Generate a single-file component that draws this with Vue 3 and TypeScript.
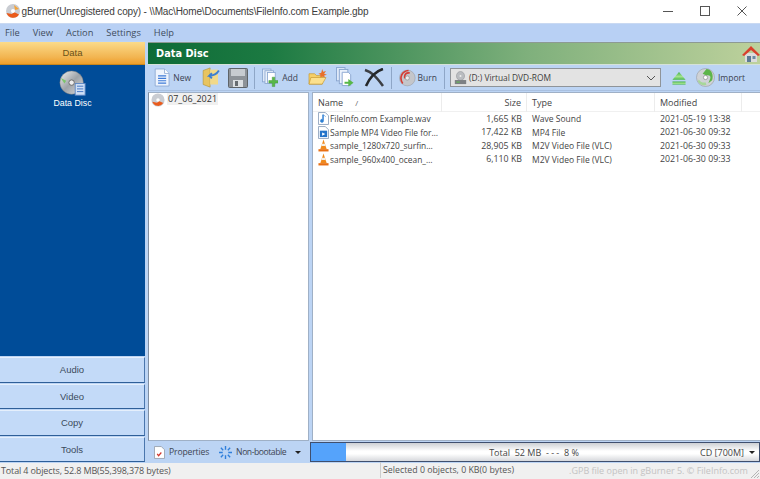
<script setup lang="ts">
interface FileRow { name: string; size: string; type: string; modified: string; icon: 'wav' | 'mp4' | 'vlc' }
const files: FileRow[] = [
  { name: 'FileInfo.com Example.wav', size: '1,665 KB', type: 'Wave Sound', modified: '2021-05-19 13:38', icon: 'wav' },
  { name: 'Sample MP4 Video File for…', size: '17,422 KB', type: 'MP4 File', modified: '2021-06-30 09:32', icon: 'mp4' },
  { name: 'sample_1280x720_surfin…', size: '28,905 KB', type: 'M2V Video File (VLC)', modified: '2021-06-30 09:33', icon: 'vlc' },
  { name: 'sample_960x400_ocean_…', size: '6,110 KB', type: 'M2V Video File (VLC)', modified: '2021-06-30 09:33', icon: 'vlc' },
]
const menus = ['File', 'View', 'Action', 'Settings', 'Help']
const tabs = ['Audio', 'Video', 'Copy', 'Tools']
</script>

<template>
  <div class="app">
    <header class="title">
      <svg class="appicon" width="16" height="16" viewBox="0 0 16 16">
        <circle cx="8" cy="8" r="7" fill="#c9ccd2" />
        <path d="M1.500 10A7 7 0 0 0 14 11.500L9 9 7 11Z" fill="#ea5b1c" />
        <path d="M9 2 14 6 10 7Z" fill="#f3a33a" />
        <circle cx="8" cy="8" r="2" fill="#fff" />
      </svg>
      <span class="title-text">gBurner(Unregistered copy) - \\Mac\Home\Documents\FileInfo.com Example.gbp</span>
      <div class="winbtns">
        <svg width="12" height="12" viewBox="0 0 12 12"><path d="M1 6.500H11" stroke="#555" /></svg>
        <svg width="12" height="12" viewBox="0 0 12 12"><rect x="1.500" y="1.500" width="9" height="9" fill="none" stroke="#555" /></svg>
        <svg width="12" height="12" viewBox="0 0 12 12"><path d="M1.500 1.500 10.500 10.500M10.500 1.500 1.500 10.500" stroke="#555" /></svg>
      </div>
    </header>

    <nav class="menu"><span v-for="m in menus" :key="m">{{ m }}</span></nav>

    <div class="body">
      <aside class="side">
        <div class="side-active">Data</div>
        <div class="side-pane">
          <div class="pane-item">
            <svg width="27" height="27" viewBox="0 0 30 30">
              <defs>
                <linearGradient id="disc" x1="0" y1="0" x2="1" y2="1">
                  <stop offset="0" stop-color="#f2f2f2" />
                  <stop offset=".5" stop-color="#9ea3a8" />
                  <stop offset="1" stop-color="#dcdde0" />
                </linearGradient>
              </defs>
              <circle cx="14" cy="14" r="13" fill="url(#disc)" stroke="#777" stroke-width=".5" />
              <path d="M2 9 8 12 6 15Z" fill="#7cc56a" />
              <circle cx="14" cy="14" r="3" fill="#eee" stroke="#666" />
              <rect x="18" y="15" width="11" height="13" fill="#cfe0f6" stroke="#5b86c4" />
              <path d="M20 18H27M20 21H27M20 24H27" stroke="#3b6fc0" />
            </svg>
            <span>Data Disc</span>
          </div>
        </div>
        <div class="side-tabs">
          <div v-for="t in tabs" :key="t" class="side-tab">{{ t }}</div>
        </div>
      </aside>

      <main class="main">
        <div class="heading">
          <span>Data Disc</span>
          <svg class="home" width="18" height="18" viewBox="0 0 18 18">
            <path d="M3 8H15V17H3Z" fill="#dcdcdc" />
            <path d="M9 1 0 10 2 11 9 5 16 11 18 10Z" fill="#d8402c" />
            <rect x="5" y="11" width="4" height="6" fill="#5c7a94" />
            <rect x="10.500" y="11" width="3" height="3" fill="#6d8aa3" />
          </svg>
        </div>

        <div class="toolbar">
          <div class="tool t-new">
            <svg width="17" height="21" viewBox="0 0 20 24">
              <path d="M1.500 1.500H13L18.500 7V22.500H1.500Z" fill="#eef4fd" stroke="#8aa6d0" />
              <path d="M13 1.500V7H18.500" fill="#fff" stroke="#8aa6d0" />
              <path d="M5 10H15M5 13H15M5 16H15M5 19H15" stroke="#3f7bd8" stroke-width="1.500" />
            </svg>
            <span>New</span>
          </div>
          <svg class="i-open" width="18" height="21" viewBox="0 0 20 24">
            <path d="M1 4 9 1V23L1 20Z" fill="#e8c460" stroke="#a98a2c" stroke-width=".6" />
            <path d="M9 3H18V20H9Z" fill="#f1d98a" />
            <path d="M19 4C16 9 12 10 8 10L11 7M8 10 11 13" fill="none" stroke="#3d7fd1" stroke-width="2.200" />
          </svg>
          <svg class="i-save" width="20" height="20" viewBox="0 0 20 20">
            <rect x="0.500" y="0.500" width="19" height="19" rx="1" fill="#8d9298" stroke="#5e6368" />
            <rect x="3" y="1" width="14" height="7" fill="#c7cbd0" />
            <rect x="5" y="12" width="10" height="7" fill="#dcdfe2" />
            <rect x="7" y="13" width="3" height="5" fill="#666b70" />
          </svg>
          <i class="sep s1" />
          <div class="tool t-add">
            <svg width="17" height="20" viewBox="0 0 19 22">
              <rect x="0.500" y="0.500" width="10" height="15" fill="#dfe9f8" stroke="#8aa6d0" />
              <rect x="3.500" y="2.500" width="10" height="15" fill="#eaf1fb" stroke="#8aa6d0" />
              <rect x="6.500" y="4.500" width="9" height="13" fill="#fff" stroke="#8aa6d0" />
              <path d="M12 10V14H8V17H12V21H15V17H19V14H15V10Z" fill="#58b848" stroke="#3f8f33" stroke-width=".5" />
            </svg>
            <span>Add</span>
          </div>
          <svg class="i-folder" width="19" height="17" viewBox="0 0 20 18">
            <path d="M1 5H7L9 7H15V16H1Z" fill="#f5cf69" stroke="#c79a2d" stroke-width=".7" />
            <path d="M3 9H19L15 16H1Z" fill="#fbe08e" stroke="#c79a2d" stroke-width=".7" />
            <path d="M15 0 16 3 19 2 17 5 20 6 17 7 18 9 15 8 13 9 13 6 11 5 14 4Z" fill="#e8702a" />
          </svg>
          <svg class="i-move" width="18" height="21" viewBox="0 0 19 22">
            <rect x="0.500" y="0.500" width="9" height="14" fill="#dfe9f8" stroke="#8aa6d0" />
            <rect x="3.500" y="2.500" width="9" height="15" fill="#eaf1fb" stroke="#8aa6d0" />
            <path d="M6.500 5.500H13L15.500 8V19.500H6.500Z" fill="#fff" stroke="#8aa6d0" />
            <path d="M9 15.500H13V12.500L18.500 16.500 13 20.500V17.500H9Z" fill="#58b848" />
          </svg>
          <svg class="i-del" width="20" height="19" viewBox="0 0 20 19">
            <path d="M1 2C7 4 11 7 19 18" fill="none" stroke="#3c3f44" stroke-width="2.600" />
            <path d="M19 1C12 3 6 9 2 18" fill="none" stroke="#24272a" stroke-width="2.600" />
          </svg>
          <i class="sep s2" />
          <div class="tool t-burn">
            <svg width="19" height="20" viewBox="0 0 20 21">
              <circle cx="10" cy="10.500" r="9.500" fill="#c4c6ca" stroke="#8c8e92" stroke-width=".5" />
              <path d="M4.500 17C-.5 10 4 2 11.500 1.500M7 11C6 6 9 3.500 13 4.500" fill="none" stroke="#d43d35" stroke-width="2" />
              <circle cx="10" cy="10.500" r="2.500" fill="#eee" stroke="#777" stroke-width=".6" />
            </svg>
            <span>Burn</span>
          </div>
          <i class="sep s2" />
          <div class="combo">
            <svg width="13" height="14" viewBox="0 0 16 17">
              <ellipse cx="8" cy="6" rx="5" ry="5.500" fill="#b9bcc0" stroke="#8b8e92" stroke-width=".6" />
              <circle cx="8" cy="6" r="1.200" fill="#eee" />
              <path d="M1 11H15V16H1Z" fill="#7d8084" />
              <path d="M3 13.500H7" stroke="#5fc24f" stroke-width="1.200" />
            </svg>
            <span class="combo-text">(D:) Virtual DVD-ROM</span>
            <svg class="chev" width="10" height="6" viewBox="0 0 10 6"><path d="M1 1 5 5 9 1" fill="none" stroke="#555" /></svg>
          </div>
          <svg class="eject" width="14" height="14" viewBox="0 0 16 16">
            <defs>
              <linearGradient id="ej" x1="0" y1="0" x2="0" y2="1">
                <stop offset="0" stop-color="#3fae45" />
                <stop offset=".6" stop-color="#a5e48f" />
                <stop offset="1" stop-color="#46b64a" />
              </linearGradient>
            </defs>
            <path d="M8 1 15.500 10H.500Z" fill="url(#ej)" />
            <rect x=".5" y="12" width="15" height="3.500" fill="url(#ej)" />
          </svg>
          <div class="tool t-import">
            <svg width="19" height="19" viewBox="0 0 20 20">
              <circle cx="10" cy="10" r="9.500" fill="#cfd2d6" stroke="#8c8e92" stroke-width=".5" />
              <path d="M11 1C16 1 19 7 17 13L13 16 15 11C16 8 13 7 11 8L7 6Z" fill="#5db54a" />
              <path d="M3 12C5 15 8 16 10 15L11 18C7 19 3 17 2 14Z" fill="#a7d79a" />
              <circle cx="10" cy="10" r="2.200" fill="#fff" stroke="#777" stroke-width=".6" />
            </svg>
            <span>Import</span>
          </div>
        </div>

        <div class="panels">
          <section class="tree">
            <div class="tree-row">
              <svg width="14" height="14" viewBox="0 0 16 16">
                <circle cx="8" cy="8" r="7.500" fill="#c9ccd2" />
                <path d="M1.500 10A7 7 0 0 0 14 11.500L9 9 7 11Z" fill="#ea5b1c" />
                <circle cx="8" cy="8" r="2" fill="#fff" />
              </svg>
              <span class="tree-label">07_06_2021</span>
            </div>
          </section>
          <section class="list">
            <div class="list-head">
              <div class="col-name"><span>Name</span><span class="sort">/</span></div>
              <div class="col-size">Size</div>
              <div class="col-type">Type</div>
              <div class="col-mod">Modified</div>
              <div class="col-rest" />
            </div>
            <div v-for="f in files" :key="f.name" class="list-row">
              <div class="col-name cell">
                <svg v-if="f.icon === 'wav'" width="11" height="13" viewBox="0 0 12 14">
                  <path d="M.5.5H8L11.500 4V13.500H.5Z" fill="#fff" stroke="#8fa3bd" />
                  <path d="M6 3V9.500A1.700 1.700 0 1 1 5 8V3H6L8.500 5" fill="#2d7fd3" stroke="#2d7fd3" stroke-width=".6" />
                </svg>
                <svg v-else-if="f.icon === 'mp4'" width="11" height="13" viewBox="0 0 12 14">
                  <path d="M.5.5H8L11.500 4V13.500H.5Z" fill="#fff" stroke="#8fa3bd" />
                  <rect x="2" y="5" width="8" height="7" fill="#2373c9" />
                  <path d="M4.500 7 8 8.500 4.500 10.500Z" fill="#fff" />
                </svg>
                <svg v-else width="11" height="13" viewBox="0 0 12 14">
                  <path d="M6 .5 9.500 11H2.500Z" fill="#f08a1d" />
                  <path d="M4.400 5H7.600L8.200 7.500H3.800Z" fill="#f4f0e8" />
                  <path d="M.5 11H11.500V13.500H.5Z" fill="#e86f13" />
                </svg>
                <span class="fname">{{ f.name }}</span>
              </div>
              <div class="col-size cell">{{ f.size }}</div>
              <div class="col-type cell type-cell">{{ f.type }}</div>
              <div class="col-mod cell">{{ f.modified }}</div>
            </div>
          </section>
        </div>

        <div class="bottom">
          <div class="props">
            <div class="prop">
              <svg width="11" height="13" viewBox="0 0 12 14">
                <path d="M.5.5H8L11.500 4V13.500H.5Z" fill="#fff" stroke="#9aa3b0" />
                <path d="M3.500 8.500 5 10.500 8 7" fill="none" stroke="#d0342c" stroke-width="1.300" />
              </svg>
              <span class="p-label">Properties</span>
            </div>
            <div class="prop nb">
              <svg width="13" height="13" viewBox="0 0 14 14">
                <path d="M7 0V4M7 10V14M0 7H4M10 7H14M2 2 4.500 4.500M12 2 9.500 4.500M2 12 4.500 9.500M12 12 9.500 9.500" stroke="#2f7fdb" stroke-width="1.500" />
              </svg>
              <span class="nb-label">Non-bootable</span>
              <i class="caret" />
            </div>
          </div>
          <div class="capacity">
            <div class="cap-fill" />
            <div class="cap-text"><span>Total&nbsp;&nbsp;52 MB&nbsp;&nbsp;- - -&nbsp;&nbsp;8 %</span></div>
            <div class="cap-type"><span>CD [700M]</span><i class="caret" /></div>
          </div>
        </div>
      </main>
    </div>

    <footer class="status">
      <div class="st-left">Total 4 objects, 52.8 MB(55,398,378 bytes)</div>
      <div class="st-right">
        <span>Selected 0 objects, 0 KB(0 bytes)</span>
        <span class="mark">.GPB file open in gBurner 5. © FileInfo.com</span>
      </div>
      <svg class="grip" width="12" height="12" viewBox="0 0 12 12"><path d="M11 3 3 11M11 6 6 11M11 9 9 11" stroke="#b5b5b5" /></svg>
    </footer>
  </div>
</template>

<style>
html, body { margin: 0; background: #fff; }
</style>

<style scoped>
.app {
  width: 760px; height: 479px; overflow: hidden; display: flex; flex-direction: column;
  font-family: "Liberation Sans", Arial, sans-serif; font-size: 9.500px; color: #444; background: #bcd4f4;
}
.title { height: 23px; flex: none; display: flex; align-items: center; background: #fff; padding-left: 5px; padding-bottom: 1px; box-sizing: border-box; }
.appicon { flex: none; }
.title-text { margin-left: 0.500px; font-family: "Liberation Sans", sans-serif; font-size: 10px; letter-spacing: -.15px; color: #3c3c3c; white-space: nowrap; }
.winbtns { margin-left: auto; display: flex; gap: 25px; padding-right: 12px; }
.menu { height: 18px; flex: none; display: flex; align-items: center; gap: 13px; padding-left: 5px; padding-bottom: 1px; background: #b8d0f4; font-family: "Open Sans", sans-serif; font-size: 9.300px; color: #3f4d60; border-top: 1px solid #c9d9f2; box-sizing: border-box; }
.body { flex: 1; display: flex; min-height: 0; }
.side { width: 145px; flex: none; display: flex; flex-direction: column; padding-top: 1px; box-sizing: border-box; background: #bcd4f4; }
.side-active { height: 23px; flex: none; display: flex; align-items: center; justify-content: center; padding-bottom: 1px; background: linear-gradient(#fbdb8a, #f2b450 70%, #ee9f2b); color: #6a5218; font-size: 9.500px; box-sizing: border-box; border-bottom: 1px solid #c9861c; }
.side-pane { flex: 1; background: #004c98; }
.pane-item { display: flex; flex-direction: column; align-items: center; padding-top: 5px; color: #fff; font-size: 8.800px; gap: 1px; }
.side-tabs { flex: none; display: flex; flex-direction: column; gap: 1px; padding-top: 1px; padding-bottom: 1px; }
.side-tab { height: 25.500px; display: flex; align-items: center; justify-content: center; background: #c3daf8; color: #3b4a5c; border-top: 1px solid #e5effc; border-bottom: 1px solid #2e5f99; border-right: 1px solid #4a76ad; box-sizing: border-box; font-size: 9.500px; }
.main { flex: 1; min-width: 0; margin-left: 3px; display: flex; flex-direction: column; padding-top: 1px; }
.heading { height: 23px; flex: none; display: flex; align-items: center; justify-content: space-between; padding-left: 8px; box-sizing: border-box; color: #fff; font-family: "DejaVu Sans", sans-serif; font-size: 9.800px; font-weight: 700; background: linear-gradient(90deg, #0e6b37, #1c7a42 20%, #7fb07c 62%, #bdd19c); border-top: 1px solid #8d9a93; border-bottom: 1px solid #d5e2d8; }
.toolbar { height: 26px; flex: none; display: flex; align-items: center; padding-left: 6px; background: #bcd4f4; border-bottom: 1px solid #a9c0e0; box-sizing: border-box; }
.tool { display: flex; align-items: center; font-size: 8.500px; color: #3b4250; font-family: "Open Sans", sans-serif; flex: none; }
.t-new { gap: 3px; width: 37px; }
.i-open { margin-left: 11px; flex: none; }
.i-save { margin-left: 8px; flex: none; }
.t-add { gap: 4px; width: 36px; }
.i-folder { margin-left: 10px; flex: none; }
.i-move { margin-left: 9px; flex: none; }
.i-del { margin-left: 10px; flex: none; }
.t-burn { gap: 2px; width: 38px; }
.sep { width: 1px; height: 22px; background: #8ea6c7; flex: none; }
.s1 { margin: 0 7px 0 6px; }
.s2 { margin: 0 7px 0 7px; }
.combo { width: 211px; height: 19px; margin-left: -2px; box-sizing: border-box; border: 1px solid #8f9499; background: #e3e3e3; display: flex; align-items: center; padding: 0 4px 0 3px; gap: 2px; flex: none; }
.combo-text { flex: 1; font-family: "Open Sans", sans-serif; font-size: 8.400px; color: #3e3e3e; white-space: nowrap; }
.chev { flex: none; }
.eject { margin-left: 11px; flex: none; }
.t-import { margin-left: 10px; gap: 3px; }
.panels { flex: 1; min-height: 0; display: flex; gap: 3px; padding-top: 1px; }
.tree { width: 161px; flex: none; box-sizing: border-box; background: #fff; border: 1px solid #9fb0c6; border-left-color: #7f8ea2; padding: 0 2px; }
.tree-row { display: flex; align-items: flex-start; height: 14px; gap: 2px; }
.tree-label { background: #f0f0f0; padding: 0 1px; line-height: 12px; font-family: "Open Sans", sans-serif; font-size: 9px; color: #333; }
.list { flex: 1; min-width: 0; background: #fff; border: 1px solid #9fb0c6; border-right: none; box-sizing: border-box; }
.list-head { display: flex; height: 19px; align-items: center; font-family: "Open Sans", sans-serif; font-size: 9px; color: #444; box-shadow: inset 0 -1px 0 #f0f0f0; }
.list-head > div { height: 100%; display: flex; align-items: center; box-sizing: border-box; border-right: 1px solid #ececec; }
.col-name { width: 129px; padding-left: 5px; gap: 1px; box-sizing: border-box; flex: none; }
.list-head .col-name { gap: 12px; }
.sort { font-size: 8px; color: #666; }
.col-size { width: 85px; box-sizing: border-box; padding-right: 5px; flex: none; justify-content: flex-end; text-align: right; }
.col-type { width: 128px; padding-left: 5px; box-sizing: border-box; flex: none; }
.col-mod { width: 87px; padding-left: 5px; box-sizing: border-box; flex: none; }
.col-rest { flex: 1; border-right: none !important; }
.list-row { display: flex; height: 13.500px; align-items: center; font-family: "Open Sans", sans-serif; font-size: 8.800px; color: #444; }
.cell { display: flex; align-items: center; white-space: nowrap; }
.fname { white-space: nowrap; font-size: 8.400px; }
.type-cell { font-size: 8.500px; }
.bottom { height: 22px; flex: none; display: flex; }
.props { width: 162px; flex: none; display: flex; align-items: center; padding-left: 6px; box-sizing: border-box; font-family: "Open Sans", sans-serif; font-size: 8.600px; color: #3d4553; white-space: nowrap; }
.prop { display: flex; align-items: center; gap: 4px; flex: none; }
.p-label { letter-spacing: -.15px; }
.nb-label { letter-spacing: -.45px; }
.prop.nb { margin-left: 10px; }
.caret { display: inline-block; width: 0; height: 0; border: 3px solid transparent; border-top: 3.500px solid #222; border-bottom: 0; margin-left: 5px; }
.capacity { flex: 1; min-width: 0; margin: 1px 0 1px 0; box-sizing: border-box; border: 1px solid #3f4f6e; display: flex; align-items: center; background: linear-gradient(#cdd0d4, #fff 45%, #fff 60%, #d6d8dc); font-family: "Open Sans", sans-serif; font-size: 9px; color: #444; }
.cap-fill { width: 35px; align-self: stretch; background: #55a3fb; flex: none; }
.cap-text { flex: 1; text-align: center; padding-left: 22px; white-space: nowrap; }
.cap-type { display: flex; align-items: center; padding-right: 4px; }
.status { height: 16px; flex: none; display: flex; align-items: center; background: #f0f0f0; font-family: "Open Sans", sans-serif; font-size: 8.800px; color: #555; position: relative; padding-bottom: 2px; box-sizing: border-box; }
.st-left { width: 381px; flex: none; white-space: nowrap; padding-left: 1px; box-sizing: border-box; border-right: 1px solid #cdcdcd; height: 16px; display: flex; align-items: center; font-size: 9px; letter-spacing: -.14px; }
.st-right { flex: 1; display: flex; align-items: center; padding-left: 2px; white-space: nowrap; height: 100%; }
.mark { margin-left: 55px; color: #c3c3c3; font-size: 9px; }
.grip { position: absolute; right: 0; bottom: 0; }
</style>
